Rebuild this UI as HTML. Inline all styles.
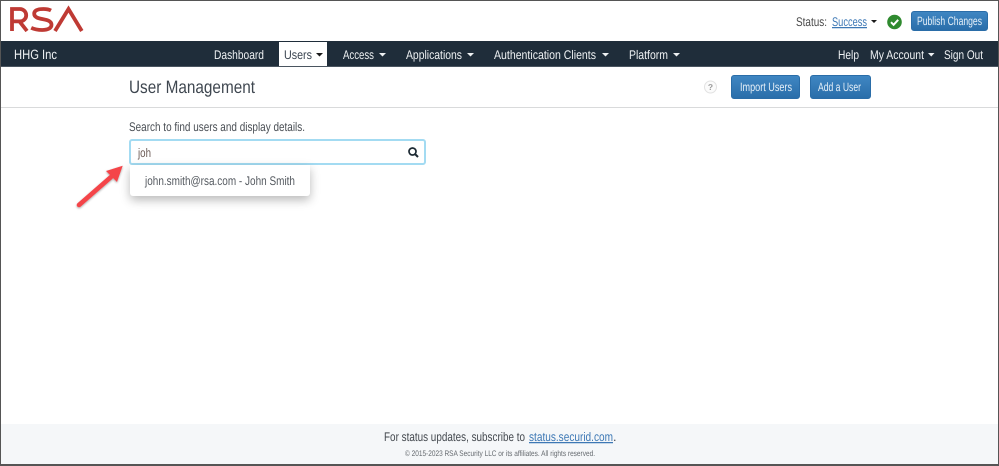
<!DOCTYPE html>
<html><head><meta charset="utf-8"><title>User Management</title>
<style>
html,body{margin:0;padding:0;background:#fff}
body{width:999px;height:466px;position:relative;overflow:hidden;font-family:"Liberation Sans",sans-serif}
.b{position:absolute;box-sizing:border-box}
.btn{background:linear-gradient(#3f86c2,#2a6eaa);border:1px solid #2a6da8;border-radius:3px}
svg{position:absolute;left:0;top:0}
text{font-family:"Liberation Sans",sans-serif;text-rendering:geometricPrecision}
</style></head><body>
<div class="b" style="left:0;top:41px;width:999px;height:26px;background:#1f2d3a;border-bottom:1px solid #4a5560"></div>
<div class="b" style="left:279px;top:42px;width:48px;height:24px;background:#fff"></div>
<div class="b" style="left:0;top:107px;width:999px;height:1px;background:#d9dadb"></div>
<div class="b btn" style="left:911px;top:11px;width:77px;height:20px"></div>
<div class="b btn" style="left:731px;top:75px;width:69px;height:24px"></div>
<div class="b btn" style="left:810px;top:75px;width:61px;height:24px"></div>
<div class="b" style="left:129px;top:139px;width:297px;height:26px;border:2px solid #a3dbf2;border-radius:3px"></div>
<div class="b" style="left:130px;top:165px;width:180px;height:31px;background:#fff;border-radius:0 0 3px 3px;box-shadow:0 4px 10px rgba(0,0,0,.28)"></div>
<div class="b" style="left:0;top:424px;width:999px;height:40px;background:#f5f7f9"></div>
<div class="b" style="left:0;top:0;width:999px;height:466px;border:1px solid #555;border-width:1px 1px 2px 1px"></div>
<svg width="999" height="466" viewBox="0 0 999 466">
<defs><filter id="s" x="-30%" y="-30%" width="160%" height="160%"><feDropShadow dx="0" dy="1" stdDeviation="1" flood-color="#000" flood-opacity=".35"/></filter></defs>
<g fill="none" stroke="#bf3a34" stroke-width="3.800">
<path d="M12 31V9h8a6.200 6.200 0 0 1 0 12.400H12M19.500 21.400l7.500 9.600"/>
<path d="M51 10.500c-1.500-.8-4-1.500-7.500-1.500-6 0-9.300 1.700-9.300 4.800 0 7.300 17.300 3.300 17.300 11 0 3.500-4 5.200-9.300 5.200-4.500 0-8-.8-11-2.200"/>
<path d="M55 31L68.500 9 81.800 31"/>
</g>
<g font-size="12.500" fill="#eef1f3">
<text x="14" y="59" font-size="13.500" textLength="43" lengthAdjust="spacingAndGlyphs">HHG Inc</text>
<text x="214" y="59" textLength="50" lengthAdjust="spacingAndGlyphs">Dashboard</text>
<text x="284" y="59" textLength="28" lengthAdjust="spacingAndGlyphs" fill="#3a4450">Users</text>
<text x="343" y="59" textLength="31" lengthAdjust="spacingAndGlyphs">Access</text>
<text x="406" y="59" textLength="56" lengthAdjust="spacingAndGlyphs">Applications</text>
<text x="494" y="59" textLength="102" lengthAdjust="spacingAndGlyphs">Authentication Clients</text>
<text x="629" y="59" textLength="39" lengthAdjust="spacingAndGlyphs">Platform</text>
<text x="838" y="59" textLength="21" lengthAdjust="spacingAndGlyphs">Help</text>
<text x="870" y="59" textLength="54" lengthAdjust="spacingAndGlyphs">My Account</text>
<text x="944" y="59" textLength="39" lengthAdjust="spacingAndGlyphs">Sign Out</text>
</g>
<g fill="#eef1f3">
<path d="M379 53h7l-3.500 3.500zM467 53h7l-3.500 3.500zM602 53h7l-3.500 3.500zM673 53h7l-3.500 3.500zM928 53h6.500l-3.250 3.500z"/>
</g>
<path d="M316 53h7l-3.500 3.500zM871 20h6l-3 3z" fill="#1a1a1a"/>
<text x="796" y="26" font-size="12.500" fill="#4a4a4a" textLength="31" lengthAdjust="spacingAndGlyphs">Status:</text>
<text x="832" y="26" font-size="12.500" fill="#3d78b5" text-decoration="underline" textLength="35" lengthAdjust="spacingAndGlyphs">Success</text>
<circle cx="894.500" cy="22" r="7.300" fill="#2f8a2f"/>
<path d="M891 22.200l2.600 2.600 4.600-5" fill="none" stroke="#fff" stroke-width="2"/>
<g font-size="12" fill="#e6f0f8">
<text x="917" y="25" textLength="65" lengthAdjust="spacingAndGlyphs">Publish Changes</text>
<text x="740" y="91" textLength="52" lengthAdjust="spacingAndGlyphs">Import Users</text>
<text x="818" y="91" textLength="43" lengthAdjust="spacingAndGlyphs">Add a User</text>
</g>
<text x="129" y="93" font-size="18" fill="#3f4750" textLength="126" lengthAdjust="spacingAndGlyphs">User Management</text>
<circle cx="710.500" cy="87" r="6" fill="#fbfbfb" stroke="#e2e2e2"/>
<text x="710.500" y="90" font-size="8.500" font-weight="bold" fill="#999" text-anchor="middle">?</text>
<text x="129" y="131" font-size="12.500" fill="#4a4f55" textLength="176" lengthAdjust="spacingAndGlyphs">Search to find users and display details.</text>
<text x="138" y="157" font-size="12.500" fill="#6b5a55" textLength="13" lengthAdjust="spacingAndGlyphs">joh</text>
<circle cx="412.500" cy="151.500" r="3.500" fill="none" stroke="#1d2a33" stroke-width="1.700"/>
<path d="M415 154l3 3" stroke="#1d2a33" stroke-width="2"/>
<text x="145" y="185" font-size="12.500" fill="#555a60" textLength="150" lengthAdjust="spacingAndGlyphs">john.smith@rsa.com - John Smith</text>
<g filter="url(#s)">
<path d="M79 205L111 177" stroke="#f4444a" stroke-width="4.600" stroke-linecap="round"/>
<path d="M122.700 165.700L106 171 117 182z" fill="#f4444a"/>
</g>
<text x="384" y="441" font-size="12.500" fill="#44494f" textLength="141" lengthAdjust="spacingAndGlyphs">For status updates, subscribe to</text>
<text x="529" y="441" font-size="12.500" fill="#3d78b5" text-decoration="underline" textLength="84" lengthAdjust="spacingAndGlyphs">status.securid.com</text>
<text x="613" y="441" font-size="12.500" fill="#44494f">.</text>
<text x="405" y="456" font-size="8" fill="#666b70" textLength="190" lengthAdjust="spacingAndGlyphs">© 2015-2023 RSA Security LLC or its affiliates. All rights reserved.</text>
</svg>
</body></html>
